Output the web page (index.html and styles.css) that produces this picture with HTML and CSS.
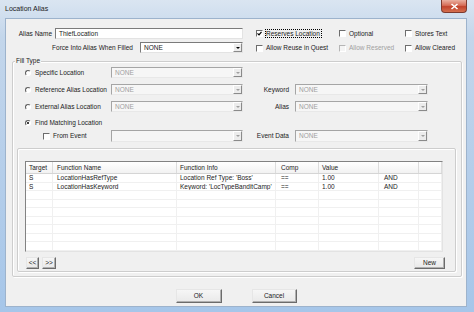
FILE: index.html
```html
<!DOCTYPE html>
<html lang="en">
<head>
  <meta charset="UTF-8">
  <title>Location Alias</title>
  <link rel="stylesheet" href="styles.css">
</head>
<body>
  <div class="window">
    <div class="titlebar">
      <span class="title">Location Alias</span>
      <span class="close">
        <svg width="9" height="7" viewBox="0 0 9 7"><path d="M1.5 1 L7.5 6 M7.5 1 L1.5 6" stroke="#fff" stroke-width="1.6"/></svg>
      </span>
    </div>

    <div class="client">
      <div class="top">
        <div class="alias-fields">
          <div class="field-row">
            <label>Alias Name</label>
            <div class="textbox alias-name">ThiefLocation</div>
          </div>
          <div class="field-row force-row">
            <label>Force Into Alias When Filled</label>
            <div class="combo force-combo"><span class="combo-text">NONE</span><span class="combo-btn"></span></div>
          </div>
        </div>

        <div class="flags">
          <div class="check">
            <span class="box checked"><svg width="5" height="5" viewBox="0 0 5 5"><path d="M0.5 2.4 L2 3.9 L4.5 0.8" fill="none" stroke="#000" stroke-width="1.2"/></svg></span>
            <span class="focus">Reserves Location</span>
          </div>
          <div class="check"><span class="box"></span>Optional</div>
          <div class="check"><span class="box"></span>Stores Text</div>
          <div class="check"><span class="box"></span>Allow Reuse in Quest</div>
          <div class="check disabled"><span class="box"></span>Allow Reserved</div>
          <div class="check"><span class="box"></span>Allow Cleared</div>
        </div>
      </div>

      <div class="group fill-type">
        <span class="group-label">Fill Type</span>

        <div class="fill-grid">
          <div class="opt"><span class="radio"></span>Specific Location</div>
          <div class="combo disabled"><span class="combo-text">NONE</span><span class="combo-btn"></span></div>
          <div></div>
          <div></div>

          <div class="opt"><span class="radio"></span>Reference Alias Location</div>
          <div class="combo disabled"><span class="combo-text">NONE</span><span class="combo-btn"></span></div>
          <div class="side-label">Keyword</div>
          <div class="combo disabled"><span class="combo-text">NONE</span><span class="combo-btn"></span></div>

          <div class="opt"><span class="radio"></span>External Alias Location</div>
          <div class="combo disabled"><span class="combo-text">NONE</span><span class="combo-btn"></span></div>
          <div class="side-label">Alias</div>
          <div class="combo disabled"><span class="combo-text">NONE</span><span class="combo-btn"></span></div>

          <div class="opt find-row"><span class="radio on"></span>Find Matching Location</div>

          <div class="check from-event"><span class="box"></span>From Event</div>
          <div class="combo disabled tall"><span class="combo-text"></span><span class="combo-btn"></span></div>
          <div class="side-label">Event Data</div>
          <div class="combo disabled tall"><span class="combo-text">NONE</span><span class="combo-btn"></span></div>
        </div>

        <div class="group conditions">
          <div class="listview">
            <div class="lv-head">
              <span>Target</span><span>Function Name</span><span>Function Info</span><span>Comp</span><span>Value</span><span></span><span></span>
            </div>
            <div class="lv-row">
              <span>S</span><span>LocationHasRefType</span><span>Location Ref Type: 'Boss'</span><span>==</span><span>1.00</span><span>AND</span><span></span>
            </div>
            <div class="lv-row">
              <span>S</span><span>LocationHasKeyword</span><span>Keyword: 'LocTypeBanditCamp'</span><span>==</span><span>1.00</span><span>AND</span><span></span>
            </div>
            <div class="lv-row"><span></span><span></span><span></span><span></span><span></span><span></span><span></span></div>
            <div class="lv-row"><span></span><span></span><span></span><span></span><span></span><span></span><span></span></div>
            <div class="lv-row"><span></span><span></span><span></span><span></span><span></span><span></span><span></span></div>
            <div class="lv-row"><span></span><span></span><span></span><span></span><span></span><span></span><span></span></div>
            <div class="lv-row"><span></span><span></span><span></span><span></span><span></span><span></span><span></span></div>
            <div class="lv-row"><span></span><span></span><span></span><span></span><span></span><span></span><span></span></div>
            <div class="lv-row"><span></span><span></span><span></span><span></span><span></span><span></span><span></span></div>
          </div>

          <div class="list-buttons">
            <button class="btn prev">&lt;&lt;</button>
            <button class="btn next">&gt;&gt;</button>
            <button class="btn new">New</button>
          </div>
        </div>
      </div>

      <div class="actions">
        <button class="btn ok">OK</button>
        <button class="btn cancel">Cancel</button>
      </div>
    </div>
  </div>
</body>
</html>
```

FILE: styles.css
```css
* {
  box-sizing: border-box;
}
body {
  margin: 0;
  font-family: "Liberation Sans", Arial, sans-serif;
  font-size: 6.5px;
  line-height: 8px;
  color: #222;
}
.window {
  width: 474px;
  height: 312px;
  overflow: hidden;
  background: linear-gradient(#dae5f1, #c3d6eb 12%, #b3cdea 60%, #a6c6e9);
}
.titlebar {
  height: 18px;
  display: flex;
  align-items: flex-start;
  padding-left: 5px;
}
.title {
  margin-top: 4px;
  font-size: 7px;
  line-height: 9px;
  color: #1a1a1a;
}
.close {
  margin-left: auto;
  margin-right: 7px;
  width: 26px;
  height: 13px;
  display: flex;
  align-items: center;
  justify-content: center;
  background: linear-gradient(#eab0a0, #d66d57 45%, #c2432c 55%, #d5704f);
  border: 1px solid #7d3a2e;
  border-top: 0;
  border-radius: 0 0 4px 4px;
}

.client {
  height: 289px;
  margin: 0 7px 0 5px;
  background: #f0f0f0;
  border: 1px solid #9db3cc;
}

/* top part */
.top {
  display: flex;
  padding-top: 9px;
}
.alias-fields {
  width: 237px;
  display: flex;
  flex-direction: column;
  gap: 3px;
}
.field-row {
  display: flex;
  justify-content: flex-end;
  align-items: center;
}
.field-row label {
  margin-right: 3px;
}
.force-row label {
  margin-right: 7px;
}
.textbox {
  background: #fff;
  border: 1px solid;
  border-color: #7b7b7b #e3e3e3 #e3e3e3 #7b7b7b;
  padding-left: 3px;
  line-height: 9px;
}
.alias-name {
  width: 188px;
  height: 11px;
}
.force-combo {
  width: 103px;
  height: 12px;
}
.flags {
  margin-left: 13px;
  display: grid;
  grid-template-columns: 83px 66px auto;
  grid-template-rows: 11px 12px;
  row-gap: 3px;
}
.check {
  display: flex;
  align-items: center;
  white-space: nowrap;
}
.box {
  width: 7px;
  height: 7px;
  flex: none;
  margin-right: 3px;
  background: #fff;
  border: 1px solid;
  border-color: #6d6d6d #fff #fff #6d6d6d;
  display: flex;
  align-items: center;
  justify-content: center;
}
.box.checked {
  margin-right: 2px;
}
.focus {
  border: 1px dotted #000;
  padding: 0 1px 0 0;
  line-height: 7px;
}
.disabled {
  color: #a0a0a0;
}
.check.disabled .box {
  border-color: #b5b5b5 #fff #fff #b5b5b5;
  background: #f4f4f4;
}

/* combo boxes */
.combo {
  display: flex;
  background: #fff;
  border: 1px solid;
  border-color: #7b7b7b #e3e3e3 #e3e3e3 #7b7b7b;
  height: 11px;
}
.combo-text {
  flex: 1;
  padding-left: 3px;
  line-height: 9px;
}
.combo-btn {
  width: 9px;
  background: #ececec;
  border: 1px solid;
  border-color: #fff #8a8a8a #8a8a8a #fff;
  display: flex;
  align-items: center;
  justify-content: center;
}
.combo-btn::before {
  content: "";
  border-left: 2px solid transparent;
  border-right: 2px solid transparent;
  border-top: 2px solid #000;
}
.combo.disabled {
  background: #f6f6f6;
  border-color: #a5a5a5 #e8e8e8 #e8e8e8 #a5a5a5;
}
.combo.disabled .combo-btn::before {
  border-top-color: #a0a0a0;
}
.combo.tall {
  height: 12px;
}

/* group boxes */
.group {
  position: relative;
  border: 1px solid #cdcdcd;
  border-radius: 2px;
  box-shadow: 1px 1px 0 #fff, inset 1px 1px 0 #fff;
}
.group-label {
  position: absolute;
  top: -5px;
  left: 2px;
  padding: 0 1px;
  background: #f0f0f0;
}
.fill-type {
  margin: 7px 0 0 6px;
  width: 450px;
  padding-bottom: 4px;
}
.fill-grid {
  display: grid;
  grid-template-columns: 98px 132px 52px 133px;
  grid-template-rows: 17px 17px 17px 15px 12px;
  align-items: center;
  padding-top: 2px;
}
.opt {
  display: flex;
  align-items: center;
  padding-left: 12px;
  white-space: nowrap;
}
.find-row {
  grid-column: 1 / -1;
}
.radio {
  width: 6px;
  height: 6px;
  flex: none;
  margin-right: 4px;
  border-radius: 50%;
  background: #fff;
  border: 1px solid;
  border-color: #5d5d5d #fff #fff #5d5d5d;
  display: flex;
  align-items: center;
  justify-content: center;
}
.radio.on::after {
  content: "";
  width: 2px;
  height: 2px;
  border-radius: 50%;
  background: #000;
}
.side-label {
  text-align: right;
  padding-right: 6px;
}
.from-event {
  padding-left: 30px;
}

.conditions {
  margin: 6px 5px 0 4px;
  padding: 12px 10px 2px 7px;
}

/* list view */
.listview {
  width: 418px;
  height: 91px;
  overflow: hidden;
  background: #fff;
  border: 1px solid;
  border-color: #828282 #e3e3e3 #e3e3e3 #828282;
}
.lv-head,
.lv-row {
  display: grid;
  grid-template-columns: 27px 124px 99px 43px 60px 40px 23px;
}
.lv-head {
  height: 12px;
  background: linear-gradient(#fff, #f2f2f2);
  border-bottom: 1px solid #d5d5d5;
}
.lv-head span {
  border-right: 1px solid #dcdcdc;
  padding-left: 3px;
  line-height: 11px;
  white-space: nowrap;
}
.lv-row {
  height: 8.5px;
  border-bottom: 1px solid #f0f0f0;
}
.lv-row span {
  border-right: 1px solid #f0f0f0;
  padding-left: 3px;
  line-height: 7.5px;
  white-space: nowrap;
  overflow: hidden;
}
.lv-head span:nth-child(2),
.lv-row span:nth-child(2) {
  padding-left: 4px;
}
.lv-head span:nth-child(4),
.lv-row span:nth-child(4),
.lv-row span:nth-child(6) {
  padding-left: 5px;
}

/* buttons */
.btn {
  font: inherit;
  color: #222;
  padding: 0;
  background: linear-gradient(#f6f6f6, #e9e9e9);
  border: 1px solid;
  border-color: #e6e6e6 #6b6b6b #6b6b6b #e6e6e6;
  box-shadow: inset -1px -1px 0 #b0b0b0;
  line-height: 10px;
}
.list-buttons {
  display: flex;
  height: 12px;
  margin-top: 5px;
}
.prev {
  width: 13px;
  margin-left: 1px;
}
.next {
  width: 14px;
  margin-left: 3px;
}
.new {
  width: 31px;
  margin-left: auto;
}
.actions {
  display: flex;
  justify-content: center;
  gap: 30px;
  margin-top: 12px;
}
.ok,
.cancel {
  height: 14px;
  line-height: 12px;
}
.ok {
  width: 46px;
}
.cancel {
  width: 45px;
}
```
